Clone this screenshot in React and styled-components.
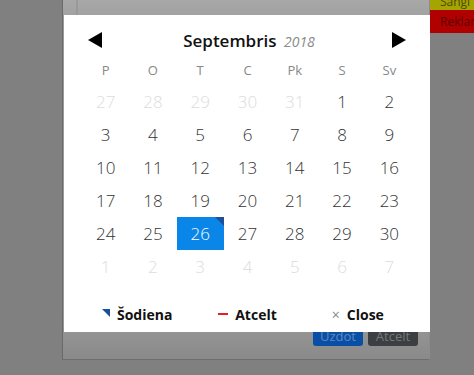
import styled, { createGlobalStyle } from "styled-components";

const GlobalStyle = createGlobalStyle`
  html, body {
    margin: 0;
    padding: 0;
    background: #808080;
  }
  body {
    font-family: "Open Sans", "Noto Sans", sans-serif;
  }
`;

const WEEKDAYS = ["P", "O", "T", "C", "Pk", "S", "Sv"];

const WEEKS = [
  [[27, true], [28, true], [29, true], [30, true], [31, true], [1], [2]],
  [[3], [4], [5], [6], [7], [8], [9]],
  [[10], [11], [12], [13], [14], [15], [16]],
  [[17], [18], [19], [20], [21], [22], [23]],
  [[24], [25], [26], [27], [28], [29], [30]],
  [[1, true], [2, true], [3, true], [4, true], [5, true], [6, true], [7, true]],
];

export default function App() {
  return (
    <>
      <GlobalStyle />
      <Stage>
        <Dialog>
          <DialogTop>
            <span className="handle" />
          </DialogTop>
          <DialogBody />
          <DialogActions>
            <ActionButton $kind="primary">Uzdot</ActionButton>
            <ActionButton>Atcelt</ActionButton>
          </DialogActions>
        </Dialog>

        <Tags>
          <Tag $bg="#a6a400" $color="#4a4a00" $h={10}>Sangi</Tag>
          <Tag $bg="#b00000" $color="#5c0000" $h={23}>Reklam</Tag>
        </Tags>

        <Picker>
          <Header>
            <Arrow $dir="left" />
            <Title>
              Septembris <em>2018</em>
            </Title>
            <Arrow $dir="right" />
          </Header>

          <Grid>
            {WEEKDAYS.map((d) => (
              <WeekDay key={d}>{d}</WeekDay>
            ))}
            {WEEKS.flat().map(([n, other], i) => (
              <Day key={i} $other={other} $selected={!other && n === 26}>
                {n}
              </Day>
            ))}
          </Grid>

          <Footer>
            <FooterItem>
              <TodayMark />
              Šodiena
            </FooterItem>
            <FooterItem>
              <CancelMark />
              Atcelt
            </FooterItem>
            <FooterItem>
              <CloseMark>×</CloseMark>
              Close
            </FooterItem>
          </Footer>
        </Picker>
      </Stage>
    </>
  );
}

const Stage = styled.div`
  position: relative;
  width: 474px;
  height: 375px;
  overflow: hidden;
  background: #808080;
`;

const Dialog = styled.div`
  position: absolute;
  left: 62px;
  top: -20px;
  width: 368px;
  height: 380px;
  display: flex;
  flex-direction: column;
  border-left: 1px solid #6a6a6a;
  border-bottom: 1px solid #6e6e6e;
  border-right: 1px solid #8c8c8c;
  background: #8e8e8e;
  box-sizing: border-box;
`;

const DialogTop = styled.div`
  height: 35px;
  background: linear-gradient(#b0b0b0, #a2a2a2);
  position: relative;

  .handle {
    position: absolute;
    left: 13px;
    top: 0;
    bottom: 0;
    width: 2px;
    background: #999;
  }
`;

const DialogBody = styled.div`
  flex: 1;
  background: #9a9a9a;
`;

const DialogActions = styled.div`
  height: 40px;
  display: flex;
  justify-content: flex-end;
  align-items: flex-start;
  gap: 5px;
  padding: 0 11px 0 0;
  background: linear-gradient(#989898, #8a8a8a);
`;

const ActionButton = styled.div`
  width: 50px;
  height: 27px;
  border-radius: 3px;
  background: ${(p) => (p.$kind === "primary" ? "#0a4fa6" : "#3b3e42")};
  color: ${(p) => (p.$kind === "primary" ? "#5f87c0" : "#777")};
  font-size: 13px;
  display: flex;
  align-items: flex-end;
  justify-content: center;
  line-height: 20px;
`;

const Tags = styled.div`
  position: absolute;
  left: 430px;
  top: 0;
  width: 44px;
  display: flex;
  flex-direction: column;
`;

const Tag = styled.div`
  height: ${(p) => p.$h}px;
  background: ${(p) => p.$bg};
  color: ${(p) => p.$color};
  font-size: 12px;
  line-height: 23px;
  padding-left: 10px;
  overflow: hidden;
  white-space: nowrap;

  &:first-child {
    line-height: 4px;
  }
`;

const Picker = styled.div`
  position: absolute;
  left: 64px;
  top: 15px;
  width: 366px;
  height: 317px;
  box-sizing: border-box;
  padding: 12px 17px 0 18px;
  background: #fff;
  display: flex;
  flex-direction: column;
`;

const Header = styled.div`
  height: 26px;
  display: flex;
  align-items: center;
  justify-content: space-between;
  padding: 0 7px 0 6px;
`;

const Arrow = styled.span`
  width: 0;
  height: 0;
  border-top: 8px solid transparent;
  border-bottom: 8px solid transparent;
  ${(p) =>
    p.$dir === "left"
      ? "border-right: 14px solid #000;"
      : "border-left: 14px solid #000;"}
`;

const Title = styled.div`
  font-size: 17px;
  font-weight: 600;
  color: #111;
  margin-left: 4px;

  em {
    font-size: 14px;
    font-weight: 400;
    color: #8a8a8a;
    margin-left: 3px;
  }
`;

const Grid = styled.div`
  margin-top: 2px;
  display: grid;
  grid-template-columns: repeat(7, 1fr);
  grid-template-rows: 30px repeat(6, 33px);
`;

const WeekDay = styled.div`
  display: flex;
  align-items: center;
  justify-content: center;
  font-size: 13px;
  color: #888;
`;

const Day = styled.div`
  position: relative;
  display: flex;
  align-items: center;
  justify-content: center;
  font-size: 17px;
  font-weight: 300;
  color: ${(p) => (p.$selected ? "#fff" : p.$other ? "#dcdcdc" : "#333")};
  background: ${(p) => (p.$selected ? "#0a86e8" : "transparent")};

  &::after {
    content: "";
    display: ${(p) => (p.$selected ? "block" : "none")};
    position: absolute;
    top: 0;
    right: 0;
    border-top: 9px solid #1d4f9a;
    border-left: 9px solid transparent;
  }
`;

const Footer = styled.div`
  margin-top: 15px;
  height: 32px;
  display: grid;
  grid-template-columns: repeat(3, 1fr);
`;

const FooterItem = styled.div`
  display: flex;
  align-items: center;
  justify-content: center;
  gap: 7px;
  font-size: 14px;
  font-weight: 700;
  color: #111;
`;

const TodayMark = styled.span`
  width: 0;
  height: 0;
  border-top: 8px solid #1a4fa0;
  border-left: 8px solid transparent;
  margin-top: -2px;
`;

const CancelMark = styled.span`
  width: 10px;
  height: 2px;
  background: #e0202a;
`;

const CloseMark = styled.span`
  font-size: 14px;
  font-weight: 400;
  color: #888;
`;
